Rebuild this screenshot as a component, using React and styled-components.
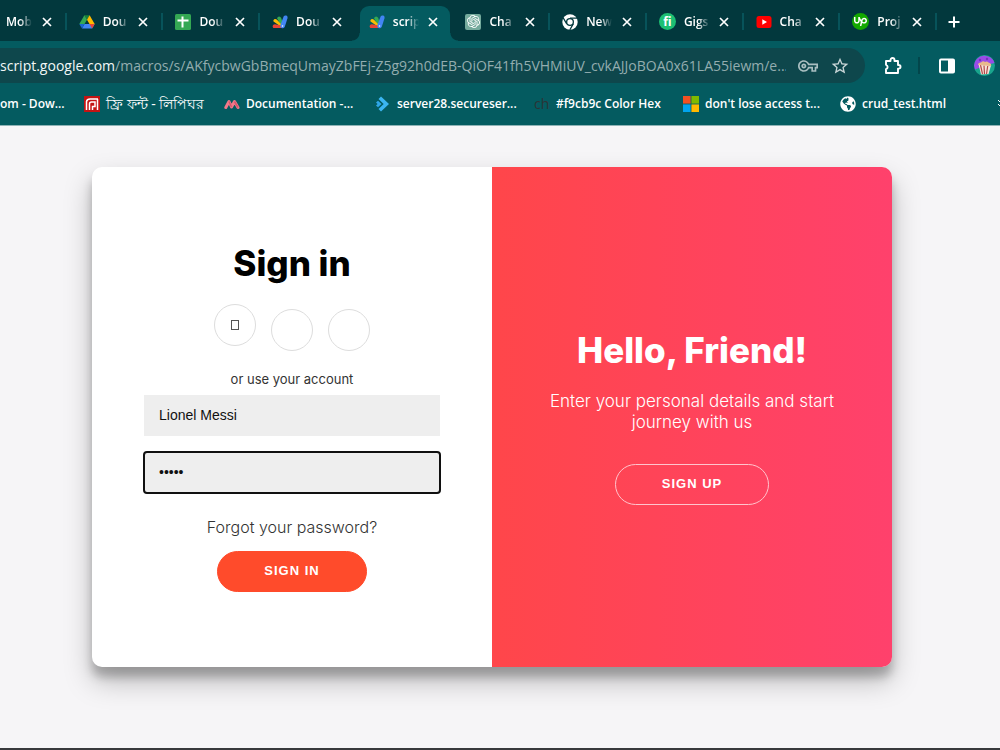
import React from "react";
import styled, { createGlobalStyle, css } from "styled-components";
import { SiOpenai, SiUpwork } from "react-icons/si";
import { FaGlobeAmericas } from "react-icons/fa";
import { MdOutlineVpnKey, MdStarOutline } from "react-icons/md";

const GlobalStyle = createGlobalStyle`
  *, *::before, *::after { box-sizing: border-box; }
  body { margin: 0; background: #f6f5f7; }
  button, input { font: inherit; }
  button { cursor: pointer; }
  svg { display: block; flex: none; }
`;

const uiFont = css`
  font-family: "Open Sans", "Noto Sans", sans-serif;
`;

const Window = styled.div`
  min-height: 100vh;
  display: flex;
  flex-direction: column;
  overflow: hidden;
  border-bottom: 2px solid #38393c;
`;

/* Browser chrome */

const Chrome = styled.header`
  ${uiFont}
  background: #045b60;
  color: #fff;
  border-bottom: 1px solid #8fb3b6;
`;

const TabStrip = styled.nav`
  display: grid;
  grid-template-columns: 1fr 63px;
  height: 41px;
  padding-top: 6px;
  margin-left: -30px;
  background: #02383d;
`;

const Tabs = styled.div`
  display: grid;
  grid-template-columns: repeat(10, 1fr);
`;

const Tab = styled.div`
  position: relative;
  display: flex;
  align-items: center;
  min-width: 0;
  padding: 0 14px 4px 12px;

  &::after {
    content: "";
    position: absolute;
    right: 0;
    top: 7px;
    width: 2px;
    height: 17px;
    background: ${(p) => (p.$divider ? "#07535a" : "transparent")};
  }

  ${(p) =>
    p.$active &&
    css`
      margin: 0 3px;
      padding: 0 11px 4px 9px;
      background: #045b60;
      border-radius: 9px 9px 0 0;

      &::before,
      &::after {
        content: "";
        position: absolute;
        top: auto;
        bottom: 0;
        width: 8px;
        height: 8px;
      }
      &::before {
        left: -8px;
        background: radial-gradient(circle at 0 0, transparent 7px, #045b60 8px);
      }
      &::after {
        right: -8px;
        background: radial-gradient(circle at 100% 0, transparent 7px, #045b60 8px);
      }
    `}
`;

const TabTitle = styled.span`
  margin-left: 8px;
  white-space: nowrap;
  font-size: 12px;
  line-height: 18px;
  font-weight: 600;
  mask-image: linear-gradient(to right, #000 14px, transparent 26px);
`;

const IconButton = styled.button`
  display: flex;
  align-items: center;
  justify-content: center;
  padding: 0;
  border: 0;
  background: none;
  color: ${(p) => p.$tone || "#fff"};
`;

const CloseButton = styled(IconButton)`
  width: 12px;
  height: 16px;
  margin-left: auto;
`;

const NewTab = styled(IconButton)`
  justify-content: flex-start;
  padding: 0 0 4px 11px;
`;

const Toolbar = styled.div`
  display: flex;
  align-items: center;
  height: 49px;
  overflow: hidden;
`;

const Omnibox = styled.div`
  flex: 1;
  min-width: 0;
  display: flex;
  align-items: center;
  gap: 12px;
  height: 35px;
  padding-right: 15px;
  border-radius: 0 18px 18px 0;
  background: #0e474c;
`;

const Url = styled.span`
  flex: 1;
  min-width: 0;
  overflow: hidden;
  white-space: nowrap;
  font-size: 14px;
  line-height: 20px;
  color: #93adaf;

  b {
    font-weight: 400;
    color: #f2f7f7;
  }
`;

const ToolbarActions = styled.div`
  display: flex;
  align-items: center;
  width: 135px;
  padding-left: 19px;
`;

const ToolbarRule = styled.span`
  width: 2px;
  height: 17px;
  margin: 0 19px 0 16px;
  background: #03464b;
`;

const Avatar = styled(IconButton)`
  margin-left: 19px;
`;

const Bookmarks = styled.nav`
  display: grid;
  grid-template-columns: 84px 140px 151px 159px 149px 157px 1fr 6px;
  align-items: center;
  height: 35px;
  padding-bottom: 7px;
  overflow: hidden;
`;

const Bookmark = styled.a`
  display: flex;
  align-items: center;
  gap: 6px;
  color: #fff;
  text-decoration: none;
  white-space: nowrap;
  font-size: ${(p) => (p.$large ? 14 : 12)}px;
  line-height: 18px;
  font-weight: ${(p) => (p.$large ? 400 : 600)};
`;

/* Page */

const Page = styled.main`
  flex: 1;
  display: flex;
  justify-content: center;
  align-items: flex-start;
  padding: 41px 16px 40px 0;
  background: #f6f5f7;
  font-family: Inter, "Liberation Sans", sans-serif;
`;

const Card = styled.div`
  display: grid;
  grid-template-columns: 1fr 1fr;
  width: 100%;
  max-width: 800px;
  min-height: 500px;
  border-radius: 10px;
  overflow: hidden;
  background: #fff;
  box-shadow: 0 14px 28px rgba(0, 0, 0, 0.25), 0 10px 10px rgba(0, 0, 0, 0.22);
`;

const panel = css`
  display: flex;
  flex-direction: column;
  align-items: center;
  justify-content: center;
  text-align: center;
`;

const Form = styled.form`
  ${panel}
  padding: 0 52px;
`;

const Welcome = styled.section`
  ${panel}
  padding: 0 40px;
  color: #fff;
  background: linear-gradient(to right, #ff464a, #ff416c);
`;

const Heading = styled.h1`
  margin: 0 0 21px;
  font-size: 35px;
  line-height: 40px;
  font-weight: 800;
`;

const Socials = styled.div`
  display: flex;
  align-items: flex-end;
  gap: 15px;
  height: 47px;
  margin-bottom: 18px;
`;

const Social = styled.a`
  display: flex;
  align-items: center;
  justify-content: center;
  width: 42px;
  height: 42px;
  border: 1px solid #ddd;
  border-radius: 50%;
  align-self: ${(p) => (p.$raised ? "flex-start" : "flex-end")};
`;

const MissingGlyph = styled.span`
  width: 8px;
  height: 10px;
  border: 1px solid #555;
`;

const Hint = styled.span`
  margin-bottom: 6px;
  font-size: 13px;
  line-height: 20px;
  color: #333;
`;

const Field = styled.input`
  width: 100%;
  height: 41px;
  padding: 0 15px;
  border: 0;
  border-radius: 0;
  background: #eee;
  color: #111;
  font-family: "Liberation Sans", Arial, sans-serif;
  font-size: 14px;

  & + & {
    margin-top: 16px;
  }

  ${(p) =>
    p.$focused &&
    css`
      outline: 2px solid #101010;
      outline-offset: -1px;
      border-radius: 3px;
    `}
`;

const Forgot = styled.a`
  margin: 24px 0 14px;
  font-size: 16px;
  line-height: 20px;
  font-weight: 300;
  color: #333;
  text-decoration: none;
`;

const Lead = styled.p`
  margin: 0 0 31px;
  font-size: 17px;
  line-height: 21px;
  font-weight: 300;
`;

const PillButton = styled.button`
  height: 41px;
  padding: 0 46px 2px;
  border: 1px solid ${(p) => (p.$ghost ? "#ffc4cd" : "#ff4b2b")};
  border-radius: 21px;
  background: ${(p) => (p.$ghost ? "transparent" : "#ff4b2b")};
  color: #fff;
  font-family: "Liberation Sans", Arial, sans-serif;
  font-size: 13px;
  font-weight: 700;
  letter-spacing: 1px;
  text-transform: uppercase;
`;

/* Icons */

const Svg = ({ size = 16, box = 16, children }) => (
  <svg width={size} height={size} viewBox={`0 0 ${box} ${box}`} aria-hidden="true">
    {children}
  </svg>
);

const CloseIcon = () => (
  <Svg size={12} box={12}>
    <path d="M2 2l8 8M10 2l-8 8" stroke="#fff" strokeWidth="1.7" />
  </Svg>
);

const DriveIcon = () => (
  <Svg>
    <path d="M5.4 1.2h5.2L8 5.7z" fill="#188038" />
    <path d="M10.6 1.2L15.700 10h-5.200L8 5.700z" fill="#ffba00" />
    <path d="M5.400 1.200L8 5.700 5.500 10H.3z" fill="#34a853" />
    <path d="M5.500 10h10.200L13.100 14.400H3z" fill="#4285f4" />
    <path d="M.3 10h5.200L3 14.400z" fill="#1967d2" />
    <path d="M10.500 10h5.200l-2.600 4.400z" fill="#ea4335" />
  </Svg>
);

const SheetsIcon = () => (
  <Svg>
    <rect width="16" height="16" rx="1.500" fill="#34a853" />
    <path d="M7.500 2.500v11M2.500 6.500h11" stroke="#fff" strokeWidth="2" />
  </Svg>
);

const ScriptIcon = () => (
  <Svg>
    <path d="M10.200 13.500L5.200 4.500Q5 2.800 7 2.500q1.600 0 2.200 1.500l2.600 8z" fill="#34a853" />
    <path d="M10.200 13.500L1.500 7.600Q.9 6 2.200 5.200q1.500-.7 2.800.5l5.700 6z" fill="#fbbc04" />
    <path d="M10 14H1.300Q.2 13 .8 11.600q.7-1.300 2.200-1.300l7 1.500z" fill="#ea4335" />
    <path d="M8.300 11.500l3.300-9Q12.600 1 14.400 1.600q1.500.8 1.200 2.300l-2.900 9Q11.700 14.500 10 14.300 8 13.500 8.300 11.500z" fill="#4285f4" />
    <circle cx="10.500" cy="12" r=".8" fill="#fff" />
  </Svg>
);

const ChromeIcon = () => (
  <Svg>
    <circle cx="8" cy="8" r="7.700" fill="#fff" />
    <path d="M8 4.200h7M4.700 9.900L1.200 3.900M11.300 9.900l-3.500 6" stroke="#02383d" strokeWidth="1.200" />
    <circle cx="8" cy="8" r="4" fill="#02383d" />
    <circle cx="8" cy="8" r="2.700" fill="#fff" />
  </Svg>
);

const PuzzleIcon = () => (
  <Svg size={18} box={18}>
    <path
      d="M2 4h4.500V3a2 2 0 0 1 4 0v1H14v4h.7a1.700 1.700 0 0 1 0 3.600H14V16H2v-3.800a2.300 2.300 0 0 0 0-4.400z"
      fill="none"
      stroke="#fff"
      strokeWidth="1.900"
      strokeLinejoin="round"
    />
  </Svg>
);

const OpenAiTile = styled.span`
  display: flex;
  align-items: center;
  justify-content: center;
  width: 16px;
  height: 16px;
  border-radius: 2px;
  background: #74aa9c;
  flex: none;
`;

const RoundLogo = styled.span`
  display: flex;
  align-items: center;
  justify-content: center;
  flex: none;
  width: 17px;
  height: 17px;
  border-radius: 50%;
  background: ${(p) => p.$fill};
  color: #fff;
  font-size: 12px;
  line-height: 16px;
  font-weight: 700;
`;

const YoutubeIcon = () => (
  <Svg>
    <rect x="0.500" y="2" width="15" height="12" rx="2.500" fill="#f00" />
    <path d="M6.300 5.200v5.600L11 8z" fill="#fff" />
  </Svg>
);

const BanglaIcon = () => (
  <Svg>
    <rect width="16" height="16" fill="#c41414" />
    <path
      d="M2.500 14V5.500Q3 3 6 3h8M13.500 3v11M5.500 14V8q0-2 2-2h3.500v4.500H8.500V14"
      fill="none"
      stroke="#fff"
      strokeWidth="1.500"
    />
  </Svg>
);

const MailerIcon = () => (
  <Svg>
    <path
      d="M1.800 11.500L5 5.500 7.500 11 10.500 5.500 14 11.500"
      fill="none"
      stroke="#f2798a"
      strokeWidth="3"
      strokeLinejoin="round"
      strokeLinecap="round"
    />
    <path d="M5 5.500L7.500 11M10.500 5.500L14 11.500" stroke="#d8566c" strokeWidth="1.500" />
  </Svg>
);

const ServerIcon = () => (
  <Svg>
    <path d="M6 .5L14 8l-8 7.500L3.500 13l5.200-5-5.200-5z" fill="#3bb5f0" />
    <path d="M3 4.700L6.500 8 3 11.300 1 9.500 2.600 8 1 6.500z" fill="#2fa6e8" />
  </Svg>
);

const ColorHexMark = styled.span`
  width: 16px;
  font-size: 14px;
  line-height: 16px;
  font-weight: 400;
  color: #2c3436;
`;

const MicrosoftIcon = () => (
  <Svg>
    <path d="M0 0h7.600v7.600H0z" fill="#f25022" />
    <path d="M8.400 0H16v7.600H8.400z" fill="#7fba00" />
    <path d="M0 8.400h7.600V16H0z" fill="#00a4ef" />
    <path d="M8.400 8.400H16V16H8.400z" fill="#ffb900" />
  </Svg>
);

const SidePanelIcon = () => (
  <Svg>
    <rect x="1" y="1.500" width="14" height="13" rx="1" fill="none" stroke="#fff" strokeWidth="2" />
    <path d="M9 1.500h6v13H9z" fill="#fff" />
  </Svg>
);

const PopcornIcon = () => (
  <Svg size={21} box={21}>
    <circle cx="10.500" cy="10.500" r="10.500" fill="#19a58d" />
    <path d="M0 10.500A10.500 10.500 0 0 1 20.500 8L12 10 1 14.500z" fill="#9a4be8" />
    <circle cx="6" cy="5" r="1.200" fill="#7434bd" />
    <circle cx="13" cy="4" r="1.200" fill="#7434bd" />
    <path d="M4.500 9l12.500 1.500-2.500 8.500-7.500.5z" fill="#f5e4da" />
    <path d="M6.500 10l2 9M10 10.500l.5 8.500M13.700 11l-1.200 8" stroke="#b5484a" strokeWidth="1.200" />
    <path d="M4 10q0-3 3-2.500 2-2 4-.5 2-1 3.500.5 3 .5 2.700 3.500z" fill="#e9b98c" />
  </Svg>
);

const TABS = [
  { title: "Mob", icon: <Svg />, divider: true },
  { title: "Dou", icon: <DriveIcon />, divider: true },
  { title: "Dou", icon: <SheetsIcon />, divider: true },
  { title: "Dou", icon: <ScriptIcon /> },
  { title: "scrip", icon: <ScriptIcon />, active: true },
  { title: "Cha", icon: <OpenAiTile><SiOpenai size={13} /></OpenAiTile>, divider: true },
  { title: "New", icon: <ChromeIcon />, divider: true },
  { title: "Gigs", icon: <RoundLogo $fill="#1dbf73">fi</RoundLogo>, divider: true },
  { title: "Cha", icon: <YoutubeIcon />, divider: true },
  { title: "Proj", icon: <RoundLogo $fill="#14a800"><SiUpwork size={13} /></RoundLogo>, divider: true },
];

const BOOKMARKS = [
  { title: "om - Dow..." },
  { title: "ফ্রি ফন্ট - লিপিঘর", icon: <BanglaIcon />, large: true },
  { title: "Documentation -...", icon: <MailerIcon /> },
  { title: "server28.secureser...", icon: <ServerIcon /> },
  { title: "#f9cb9c Color Hex", icon: <ColorHexMark>ch</ColorHexMark> },
  { title: "don't lose access t...", icon: <MicrosoftIcon /> },
  { title: "crud_test.html", icon: <FaGlobeAmericas size={16} /> },
];

export default function App() {
  return (
    <Window>
      <GlobalStyle />
      <Chrome>
        <TabStrip aria-label="Tabs">
          <Tabs>
            {TABS.map((tab, i) => (
              <Tab key={i} $active={tab.active} $divider={tab.divider}>
                {tab.icon}
                <TabTitle>{tab.title}</TabTitle>
                <CloseButton type="button" aria-label="Close tab">
                  <CloseIcon />
                </CloseButton>
              </Tab>
            ))}
          </Tabs>
          <NewTab type="button" aria-label="New tab">
            <Svg size={12} box={12}>
              <path d="M6 .5v11M.5 6h11" stroke="#fff" strokeWidth="2" />
            </Svg>
          </NewTab>
        </TabStrip>
        <Toolbar>
          <Omnibox>
            <Url>
              <b>script.google.com</b>
              /macros/s/AKfycbwGbBmeqUmayZbFEj-Z5g92h0dEB-QiOF41fh5VHMiUV_cvkAJJoBOA0x61LA55iewm/e...
            </Url>
            <IconButton type="button" aria-label="Passwords" $tone="#a9bfc1">
              <MdOutlineVpnKey size={20} />
            </IconButton>
            <IconButton type="button" aria-label="Bookmark this page" $tone="#c8d6d7">
              <MdStarOutline size={20} />
            </IconButton>
          </Omnibox>
          <ToolbarActions>
            <IconButton type="button" aria-label="Extensions">
              <PuzzleIcon />
            </IconButton>
            <ToolbarRule />
            <IconButton type="button" aria-label="Side panel">
              <SidePanelIcon />
            </IconButton>
            <Avatar type="button" aria-label="Profile">
              <PopcornIcon />
            </Avatar>
          </ToolbarActions>
        </Toolbar>
        <Bookmarks aria-label="Bookmarks">
          {BOOKMARKS.map((item) => (
            <Bookmark key={item.title} href="#" $large={item.large}>
              {item.icon}
              <span>{item.title}</span>
            </Bookmark>
          ))}
          <IconButton type="button" aria-label="More bookmarks">
            <Svg size={8} box={8}>
              <path d="M5 0l3 3M5 4l3 3" stroke="#fff" strokeWidth="1" />
            </Svg>
          </IconButton>
        </Bookmarks>
      </Chrome>
      <Page>
        <Card>
          <Form onSubmit={(e) => e.preventDefault()}>
            <Heading>Sign in</Heading>
            <Socials>
              <Social href="#" aria-label="Facebook" $raised>
                <MissingGlyph />
              </Social>
              <Social href="#" aria-label="Google" />
              <Social href="#" aria-label="LinkedIn" />
            </Socials>
            <Hint>or use your account</Hint>
            <Field type="text" aria-label="Name" defaultValue="Lionel Messi" />
            <Field type="password" aria-label="Password" defaultValue="12345" $focused />
            <Forgot href="#">Forgot your password?</Forgot>
            <PillButton type="submit">Sign In</PillButton>
          </Form>
          <Welcome>
            <Heading as="h2">Hello, Friend!</Heading>
            <Lead>Enter your personal details and start journey with us</Lead>
            <PillButton type="button" $ghost>
              Sign Up
            </PillButton>
          </Welcome>
        </Card>
      </Page>
    </Window>
  );
}
